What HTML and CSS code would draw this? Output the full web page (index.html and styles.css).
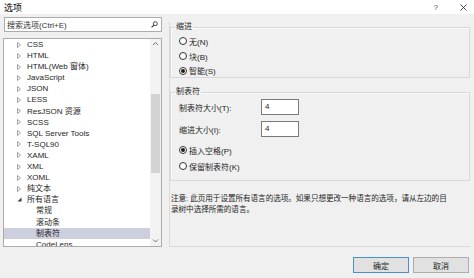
FILE: index.html
```html
<!DOCTYPE html>
<html lang="zh-CN">
<head>
    <meta charset="UTF-8">
    <title>选项</title>
    <link rel="stylesheet" href="styles.css">
</head>
<body>
<div class="window">
    <div class="titlebar">
        <span class="title">选项</span>
        <span class="caption-btns">
            <span class="help">?</span>
            <svg class="close" width="7" height="7" viewBox="0 0 7 7"><path d="M0.5 0.5 L6.5 6.5 M6.5 0.5 L0.5 6.5" stroke="#333" stroke-width="0.9"/></svg>
        </span>
    </div>

    <div class="content">
        <div class="sidebar">
            <div class="search">
                <span>搜索选项(Ctrl+E)</span>
                <svg width="7" height="7" viewBox="0 0 7 7"><circle cx="4.3" cy="2.7" r="2" fill="none" stroke="#333" stroke-width="0.9"/><path d="M2.9 4.1 L0.6 6.4" stroke="#333" stroke-width="1.1"/></svg>
            </div>
            <div class="tree">
                <ul class="tree-list">
                    <li><span class="arrow"><svg width="4" height="6" viewBox="0 0 4 6"><path d="M0.5 0.5 L3.5 3 L0.5 5.5 Z" fill="none" stroke="#8a8a8a" stroke-width="0.8"/></svg></span>CSS</li>
                    <li><span class="arrow"><svg width="4" height="6" viewBox="0 0 4 6"><path d="M0.5 0.5 L3.5 3 L0.5 5.5 Z" fill="none" stroke="#8a8a8a" stroke-width="0.8"/></svg></span>HTML</li>
                    <li><span class="arrow"><svg width="4" height="6" viewBox="0 0 4 6"><path d="M0.5 0.5 L3.5 3 L0.5 5.5 Z" fill="none" stroke="#8a8a8a" stroke-width="0.8"/></svg></span>HTML(Web 窗体)</li>
                    <li><span class="arrow"><svg width="4" height="6" viewBox="0 0 4 6"><path d="M0.5 0.5 L3.5 3 L0.5 5.5 Z" fill="none" stroke="#8a8a8a" stroke-width="0.8"/></svg></span>JavaScript</li>
                    <li><span class="arrow"><svg width="4" height="6" viewBox="0 0 4 6"><path d="M0.5 0.5 L3.5 3 L0.5 5.5 Z" fill="none" stroke="#8a8a8a" stroke-width="0.8"/></svg></span>JSON</li>
                    <li><span class="arrow"><svg width="4" height="6" viewBox="0 0 4 6"><path d="M0.5 0.5 L3.5 3 L0.5 5.5 Z" fill="none" stroke="#8a8a8a" stroke-width="0.8"/></svg></span>LESS</li>
                    <li><span class="arrow"><svg width="4" height="6" viewBox="0 0 4 6"><path d="M0.5 0.5 L3.5 3 L0.5 5.5 Z" fill="none" stroke="#8a8a8a" stroke-width="0.8"/></svg></span>ResJSON 资源</li>
                    <li><span class="arrow"><svg width="4" height="6" viewBox="0 0 4 6"><path d="M0.5 0.5 L3.5 3 L0.5 5.5 Z" fill="none" stroke="#8a8a8a" stroke-width="0.8"/></svg></span>SCSS</li>
                    <li><span class="arrow"><svg width="4" height="6" viewBox="0 0 4 6"><path d="M0.5 0.5 L3.5 3 L0.5 5.5 Z" fill="none" stroke="#8a8a8a" stroke-width="0.8"/></svg></span>SQL Server Tools</li>
                    <li><span class="arrow"><svg width="4" height="6" viewBox="0 0 4 6"><path d="M0.5 0.5 L3.5 3 L0.5 5.5 Z" fill="none" stroke="#8a8a8a" stroke-width="0.8"/></svg></span>T-SQL90</li>
                    <li><span class="arrow"><svg width="4" height="6" viewBox="0 0 4 6"><path d="M0.5 0.5 L3.5 3 L0.5 5.5 Z" fill="none" stroke="#8a8a8a" stroke-width="0.8"/></svg></span>XAML</li>
                    <li><span class="arrow"><svg width="4" height="6" viewBox="0 0 4 6"><path d="M0.5 0.5 L3.5 3 L0.5 5.5 Z" fill="none" stroke="#8a8a8a" stroke-width="0.8"/></svg></span>XML</li>
                    <li><span class="arrow"><svg width="4" height="6" viewBox="0 0 4 6"><path d="M0.5 0.5 L3.5 3 L0.5 5.5 Z" fill="none" stroke="#8a8a8a" stroke-width="0.8"/></svg></span>XOML</li>
                    <li><span class="arrow"><svg width="4" height="6" viewBox="0 0 4 6"><path d="M0.5 0.5 L3.5 3 L0.5 5.5 Z" fill="none" stroke="#8a8a8a" stroke-width="0.8"/></svg></span>纯文本</li>
                    <li><span class="arrow"><svg width="5" height="5" viewBox="0 0 5 5"><path d="M4.5 0.5 L4.5 4.5 L0.5 4.5 Z" fill="#3a3a3a"/></svg></span>所有语言</li>
                    <li class="child">常规</li>
                    <li class="child">滚动条</li>
                    <li class="child selected">制表符</li>
                    <li class="child">CodeLens</li>
                </ul>
                <div class="scrollbar">
                    <svg class="sb-arrow" width="11" height="10" viewBox="0 0 11 10"><path d="M3 6 L5.5 3.5 L8 6" fill="none" stroke="#606060" stroke-width="0.9"/></svg>
                    <div class="sb-thumb"></div>
                    <svg class="sb-arrow sb-down" width="11" height="10" viewBox="0 0 11 10"><path d="M3 3.5 L5.5 6 L8 3.5" fill="none" stroke="#606060" stroke-width="0.9"/></svg>
                </div>
            </div>
        </div>

        <div class="panel">
            <fieldset class="group group-indent">
                <legend>缩进</legend>
                <div class="radio-row"><span class="radio"></span>无(N)</div>
                <div class="radio-row"><span class="radio"></span>块(B)</div>
                <div class="radio-row"><span class="radio checked"></span>智能(S)</div>
            </fieldset>

            <fieldset class="group group-tabs">
                <legend>制表符</legend>
                <div class="field-row"><span class="field-label">制表符大小(T):</span><span class="textbox">4</span></div>
                <div class="field-row"><span class="field-label">缩进大小(I):</span><span class="textbox">4</span></div>
                <div class="radio-row first"><span class="radio checked"></span>插入空格(P)</div>
                <div class="radio-row"><span class="radio"></span>保留制表符(K)</div>
            </fieldset>

            <p class="note">注意: 此页用于设置所有语言的选项。如果只想更改一种语言的选项，请从左边的目<br>录树中选择所需的语言。</p>
        </div>
    </div>

    <div class="footer">
        <button class="btn btn-default">确定</button>
        <button class="btn">取消</button>
    </div>
</div>
</body>
</html>
```

FILE: styles.css
```css
body {
    margin: 0;
    font-family: "Liberation Sans", "Noto Sans CJK SC", sans-serif;
    font-size: 8px;
    color: #1e1e1e;
    background: #f0f0f0;
}
.window {
    width: 474px;
    height: 278px;
    overflow: hidden;
}
.titlebar {
    height: 14px;
    background: #fff;
    display: flex;
    align-items: center;
    justify-content: space-between;
    padding: 0 7px 0 4px;
}
.title {
    font-size: 9px;
    color: #000;
}
.caption-btns {
    display: flex;
    align-items: center;
    gap: 22px;
}
.help {
    color: #555;
    font-size: 8px;
}
.content {
    display: flex;
    height: 233px;
}
.sidebar {
    width: 159px;
    margin-left: 3px;
    padding-top: 3px;
    display: flex;
    flex-direction: column;
}
.search {
    height: 13px;
    margin-left: 1px;
    border: 1px solid #acacac;
    background: #fff;
    display: flex;
    align-items: center;
    justify-content: space-between;
    padding: 0 3px 0 2px;
    color: #333;
}
.tree {
    margin-top: 6px;
    flex: 1;
    border: 1px solid #acacac;
    background: #fff;
    display: flex;
    overflow: hidden;
}
.tree-list {
    list-style: none;
    margin: 0;
    padding: 0;
    flex: 1;
}
.tree-list li {
    height: 11.1px;
    line-height: 11.1px;
    white-space: nowrap;
    display: flex;
    align-items: center;
}
.arrow {
    width: 10px;
    margin-left: 13px;
    display: flex;
    align-items: center;
}
.tree-list .child {
    padding-left: 32px;
}
.tree-list .selected {
    background: #cdcfde;
}
.scrollbar {
    width: 11px;
    background: #f3f3f3;
    display: flex;
    flex-direction: column;
    align-items: center;
}
.sb-arrow {
    flex: none;
}
.sb-thumb {
    width: 9px;
    height: 79px;
    margin-top: 45px;
    background: #d3d3d3;
}
.sb-down {
    margin-top: auto;
}
.panel {
    flex: 1;
    margin: 8px 4px 0 7px;
    border-left: 1px solid #dadada;
    border-bottom: 1px solid #dadada;
    display: flex;
    flex-direction: column;
}
.group {
    margin: 0 0 0 0;
    border: 1px solid #d8d8d8;
    box-shadow: inset 1px 1px #fafafa;
    padding: 2px 0 0 8px;
}
.group legend {
    line-height: 10px;
    padding: 0 1px;
    margin-left: -4px;
}
.group-indent {
    height: 56px;
    box-sizing: border-box;
}
.group-tabs {
    margin-top: 9px;
    height: 94px;
    box-sizing: border-box;
}
.radio-row {
    height: 14.7px;
    display: flex;
    align-items: center;
}
.group-tabs .radio-row {
    height: 14px;
    margin-top: 2px;
}
.group-tabs .radio-row.first {
    margin-top: 6px;
}
.radio {
    width: 6px;
    height: 6px;
    border: 1px solid #333;
    border-radius: 50%;
    background: #fff;
    margin-right: 2px;
    display: flex;
    align-items: center;
    justify-content: center;
}
.radio.checked::after {
    content: "";
    width: 4px;
    height: 4px;
    border-radius: 50%;
    background: #1a1a1a;
}
.field-row {
    display: flex;
    align-items: center;
    height: 16px;
    margin-bottom: 6px;
}
.field-row .field-label {
    width: 82px;
}
.textbox {
    width: 33px;
    height: 14px;
    line-height: 14px;
    border: 1px solid #7a7a7a;
    background: #fff;
    padding-left: 3px;
}
.note {
    margin: 12px 0 0 1px;
    font-size: 7.6px;
    line-height: 11px;
    white-space: nowrap;
    letter-spacing: -0.05px;
}
.footer {
    display: flex;
    justify-content: flex-end;
    gap: 4px;
    padding: 10px 5px 0 0;
}
.btn {
    width: 56px;
    height: 16px;
    padding: 0;
    font-family: inherit;
    font-size: 8px;
    color: #1e1e1e;
    background: #e1e1e1;
    border: 1px solid #adadad;
}
.btn-default {
    border-color: #4a90d0;
}
```
